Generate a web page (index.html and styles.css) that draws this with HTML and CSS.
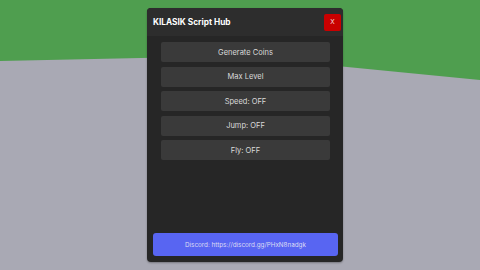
FILE: index.html
```html
<!DOCTYPE html>
<html lang="en">
<head>
  <meta charset="UTF-8">
  <title>KILASIK Script Hub</title>
  <link rel="stylesheet" href="styles.css">
</head>
<body>

  <!-- 3D scene behind the menu -->
  <svg class="scene" viewBox="0 0 480 270" preserveAspectRatio="none">
    <rect x="0" y="0" width="480" height="270" fill="#a9a9b4" />
    <polygon points="0,0 480,0 480,80 235,56 0,61" fill="#4f9e4f" />
  </svg>

  <div class="hub">
    <div class="hub-header">
      <span class="hub-title">KILASIK Script Hub</span>
      <button class="close-btn">X</button>
    </div>

    <div class="hub-body">
      <button class="option">Generate Coins</button>
      <button class="option">Max Level</button>
      <button class="option">Speed: OFF</button>
      <button class="option">Jump: OFF</button>
      <button class="option">Fly: OFF</button>
    </div>

    <div class="discord">Discord: https://discord.gg/PHxN8nadgk</div>
  </div>

</body>
</html>
```

FILE: styles.css
```css
body {
  margin: 0;
  width: 480px;
  height: 270px;
  overflow: hidden;
  font-family: Inter, "Noto Sans", sans-serif;
  position: relative;
}

.scene {
  position: absolute;
  top: 0;
  left: 0;
  width: 480px;
  height: 270px;
  z-index: 0;
}

.hub {
  position: relative;
  z-index: 1;
  width: 196px;
  height: 254px;
  margin: 8px 0 0 147px;
  background: #262626;
  border-radius: 4px;
  display: flex;
  flex-direction: column;
  overflow: hidden;
  box-shadow: 0 1px 2px rgba(0, 0, 0, 0.3);
}

.hub-header {
  height: 28px;
  background: #2d2d2d;
  display: flex;
  align-items: center;
  justify-content: space-between;
  padding: 0 2px 0 6px;
}

.hub-title {
  color: #fff;
  font-weight: 700;
  font-size: 8.3px;
}

.close-btn {
  width: 17px;
  height: 17px;
  border: none;
  border-radius: 2px;
  background: #c90000;
  color: #f2dede;
  font-family: Inter, sans-serif;
  font-size: 6.5px;
  padding: 0;
}

.hub-body {
  display: flex;
  flex-direction: column;
  gap: 4.5px;
  padding: 6px 13px 0 14px;
}

.option {
  height: 20px;
  border: none;
  border-radius: 2px;
  background: #3a3a3a;
  color: #dadada;
  font-family: Inter, sans-serif;
  font-size: 7.5px;
  padding: 0;
}

.discord {
  margin: auto 5px 6px 6px;
  height: 23px;
  border-radius: 3px;
  background: #5865f2;
  color: #dcdcf5;
  font-size: 6.3px;
  display: flex;
  align-items: center;
  justify-content: center;
}
```
